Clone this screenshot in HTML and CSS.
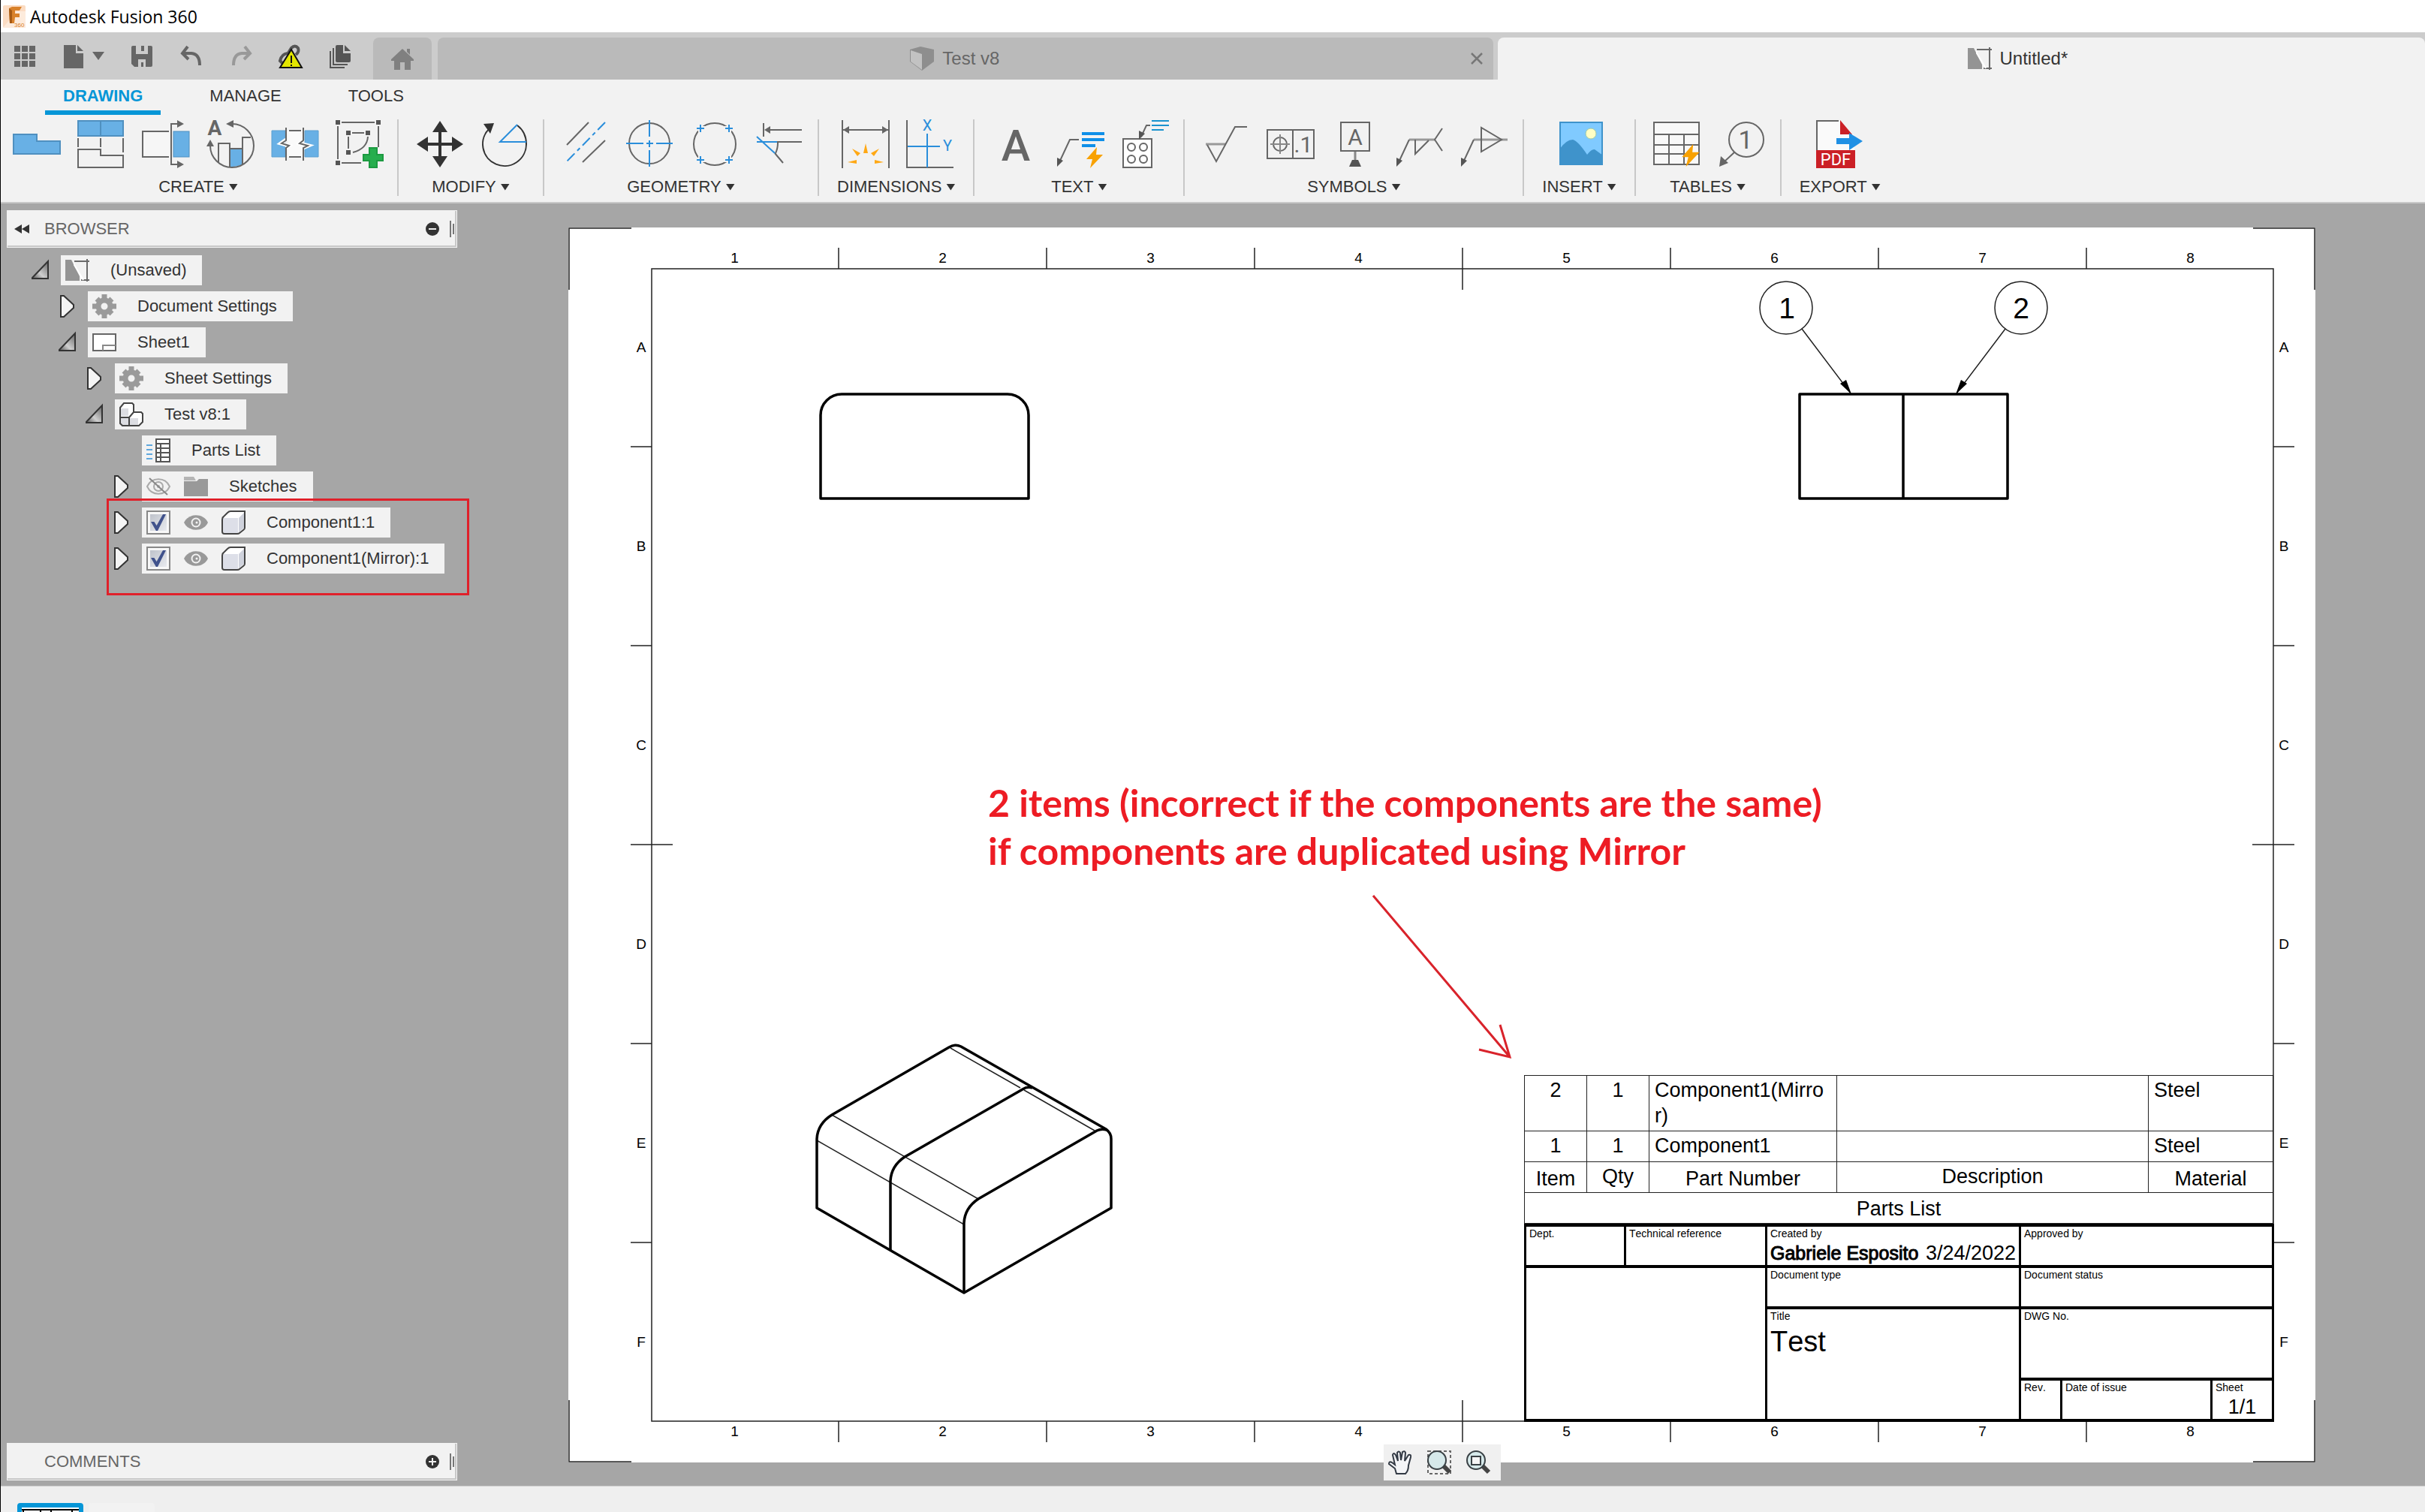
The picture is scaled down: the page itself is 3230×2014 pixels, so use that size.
FILE: index.html
```html
<!DOCTYPE html>
<html lang="en">
<head>
<meta charset="utf-8">
<title>Autodesk Fusion 360</title>
<link rel="stylesheet" href="styles.css">
</head>
<body>
<svg class="defs" aria-hidden="true">
  <symbol id="i-sheetdoc" viewBox="0 0 32 32"><path d="M0 2H8L19 24V30H0Z" fill="#949494"/><path d="M12 4H32M29 1V31M21 29H32" fill="none" stroke="#6a6a6a" stroke-width="2"/><path d="M12 6V9L24 29" fill="none" stroke="#fff" stroke-width="2"/></symbol>
  <symbol id="i-gear" viewBox="0 0 32 32"><path d="M6 6L26 26M26 6L6 26" stroke="#9a9a9a" stroke-width="7"/><path d="M16 0V32M0 16H32" stroke="#9a9a9a" stroke-width="7"/><circle cx="16" cy="16" r="8" fill="#f2f2f2" stroke="#9a9a9a" stroke-width="7"/></symbol>
  <symbol id="i-eye" viewBox="0 0 32 32"><path d="M0 16C6 3 26 3 32 16C26 29 6 29 0 16Z" fill="#999"/><circle cx="16" cy="16" r="6.500" fill="#f2f2f2"/><circle cx="16" cy="16" r="4.500" fill="#999"/><circle cx="17" cy="16" r="1.500" fill="#f2f2f2"/></symbol>
  <symbol id="i-body" viewBox="0 0 32 32"><path d="M1 12Q1 9 3 8L8 3Q10 1 12 1H31V23Q31 25 29 26L24 30Q23 31 21 31H4Q1 31 1 28Z" fill="#fff"/><path d="M2 10H22V30H4L2 28Z" fill="#dddfe8"/><path d="M23 10L30 3V23L23 29Z" fill="#cfd2dc"/><path d="M1 12Q1 9 3 8L8 3Q10 1 12 1H31V23Q31 25 29 26L24 30Q23 31 21 31H4Q1 31 1 28Z" fill="none" stroke="#444" stroke-width="2"/></symbol>
  <symbol id="i-shut" viewBox="-2 0 24 32"><path d="M1 2H5L18 14V18L5 30H1Z" fill="#f4f4f4" stroke="#333" stroke-width="2"/></symbol>
  <linearGradient id="g-open" x1="0" y1="1" x2="1" y2="0"><stop offset="0" stop-color="#555"/><stop offset=".4" stop-color="#d0d0d0"/><stop offset="1" stop-color="#666"/></linearGradient>
  <symbol id="i-open" viewBox="0 0 24 32"><path d="M1 27L22 5V27Z" fill="url(#g-open)"/><path d="M0 27L22 4V27Z" fill="none" stroke="#333" stroke-width="2"/></symbol>
  <symbol id="i-grip" viewBox="0 0 8 24"><path d="M2 1V23M6 5V19" stroke="#777" stroke-width="2"/></symbol>
  <symbol id="i-bolt" viewBox="0 0 22 28"><path d="M14 0L0 16H8L5 28L22 10H13Z" fill="#f8a100"/></symbol>
</svg>

<header class="titlebar">
  <svg class="applogo" viewBox="0 0 30 30"><rect width="30" height="30" rx="2" fill="#fbdcc3"/><path d="M0 30L18 8H30V30Z" fill="#fdebdc"/><path d="M8 4L12 2H25L22 7H16V11H22V16H16L15 24H9Z" fill="#d9822b"/><path d="M8 4L12 7V24H9Z" fill="#a65a14"/><text x="15" y="29" class="logo-num">360</text></svg>
  <h1>Autodesk Fusion 360</h1>
</header>

<nav class="topbar">
  <div class="quick">
    <button aria-label="Data panel"><svg viewBox="0 0 32 32"><path d="M2 2h8v8H2zM12 2h8v8h-8zM22 2h8v8h-8zM2 12h8v8H2zM12 12h8v8h-8zM22 12h8v8h-8zM2 22h8v8H2zM12 22h8v8h-8zM22 22h8v8h-8z" fill="#666"/></svg></button>
    <button class="file" aria-label="File"><svg viewBox="0 0 32 32"><path d="M2 1H18V12H28V32H2Z" fill="#666"/><path d="M20 1L28 9H20Z" fill="#666"/></svg><i class="caret"></i></button>
    <button aria-label="Save"><svg viewBox="0 0 32 32"><path d="M2 4Q2 2 4 2H28Q30 2 30 4V28Q30 30 28 30H6L2 26Z" fill="#666"/><path d="M8 2H24V13H8ZM11 20H21V30H11Z" fill="#ccc"/><path d="M15 2H19V9H15ZM15 24H18V30H15Z" fill="#666"/></svg></button>
    <button aria-label="Undo"><svg viewBox="0 0 32 32"><path d="M11 3L4 12L12 20M5 12H16Q27 13 27 28" fill="none" stroke="#666" stroke-width="4"/></svg></button>
    <button aria-label="Redo"><svg viewBox="0 0 32 32"><path d="M21 3L28 12L20 20M27 12H17Q6 13 6 28" fill="none" stroke="#999" stroke-width="4"/></svg></button>
    <button aria-label="Warnings"><svg viewBox="0 0 32 32"><path d="M12 13L17 5Q22 0 26 5Q28 10 23 14M12 12Q4 13 2 22L6 26" fill="none" stroke="#555" stroke-width="4"/><path d="M17 7L31 31H2Z" fill="#e3e600" stroke="#111" stroke-width="2"/><path d="M17 15V25M17 27V29" stroke="#111" stroke-width="2"/></svg></button>
    <button aria-label="Versions"><svg viewBox="0 0 32 32"><path d="M10 3Q10 1 12 1H20V12H30V22Q30 24 28 24H12Q10 24 10 22ZM22 1L30 9H22Z" fill="#555"/><path d="M7 5V27H26M3 9V31H22" fill="none" stroke="#555" stroke-width="2"/></svg></button>
  </div>
  <button class="tab home" aria-label="Home"><svg viewBox="0 0 32 32"><path d="M16 3L31 17V19H27V31H19V21H13V31H5V19H1V17ZM22 3H26V11L22 7Z" fill="#808080"/></svg></button>
  <div class="tab doc"><svg viewBox="0 0 32 32"><path d="M0 4L14 0L32 4V20L16 32L0 20Z" fill="#8e8e8e"/><path d="M1 5L16 10V31L1 20Z" fill="#c2c2c2"/></svg><span>Test v8</span><button class="close" aria-label="Close tab"><svg viewBox="0 0 16 16"><path d="M1 1L15 15M15 1L1 15" stroke="#777" stroke-width="2.500"/></svg></button></div>
  <div class="tab active"><svg><use href="#i-sheetdoc"/></svg><span>Untitled*</span></div>
</nav>

<section class="ribbon">
  <div class="ribbon-tabs">
    <a href="#drawing" class="on">DRAWING</a><a href="#manage">MANAGE</a><a href="#tools">TOOLS</a>
  </div>
  <div class="groups">
    <div class="group first">
      <div class="icons">
        <button aria-label="Base view"><svg viewBox="0 0 64 64"><path d="M1 19H32V28H63V45H1Z" fill="#68b0e5" stroke="#4f90c0" stroke-width="2"/></svg></button>
        <button aria-label="Projected view"><svg viewBox="0 0 64 64"><path d="M1 1H61V21H1ZM31 1V21" fill="#68b0e5" stroke="#4f90c0" stroke-width="2"/><path d="M1 24V36M31 24V36M61 24V43M1 39H31V47H61V63H1Z" fill="none" stroke="#666" stroke-width="2"/></svg></button>
        <button aria-label="Section view"><svg viewBox="0 0 64 64"><path d="M36 15H1V49H36" fill="#f6f6f6" stroke="#666" stroke-width="2"/><rect x="42" y="15" width="21" height="34" fill="#68b0e5" stroke="#4f90c0" stroke-width="1"/><path d="M48 5H39V59H48" fill="none" stroke="#666" stroke-width="2"/><path d="M47 0L56 5L47 10ZM47 54L56 59L47 64Z" fill="#666"/></svg></button>
        <button aria-label="Detail view"><svg viewBox="0 0 64 64"><path d="M31 38H48V59Q40 63 31 62Z" fill="#68b0e5"/><path d="M16 57V31H31V62M48 59V23H59M31 38H48" fill="none" stroke="#666" stroke-width="2"/><path d="M34 5A29 29 0 1 1 5 34" fill="none" stroke="#666" stroke-width="2"/><path d="M26 5L36 0V10ZM5 26L0 35H10Z" fill="#666"/><text x="11" y="20" class="ic-a sm">A</text></svg></button>
        <button aria-label="Break view"><svg viewBox="0 0 64 64"><path d="M1 14H19V49H1ZM45 14H63V49H45Z" fill="#68b0e5" stroke="#5b9fd0" stroke-width="1"/><path d="M22 14H42V49H22Z" fill="#fafafa"/><path d="M24 14H40M24 49H40" stroke="#666" stroke-width="2"/><path d="M20 26L13 31L24 34L20 37M43 26L38 31L50 34L43 37" fill="none" stroke="#fff" stroke-width="5"/><path d="M20 10V27L14 31L24 34L20 37V54M43 10V27L38 31L49 34L43 37V54" fill="none" stroke="#666" stroke-width="2"/></svg></button>
        <button aria-label="Create sketch"><svg viewBox="0 0 64 64"><path d="M8 3H52M3 8V52M57 8V36M8 57H34M22 17H38M17 22V38" stroke="#666" stroke-width="2"/><path d="M43 22Q42 38 23 43" fill="none" stroke="#666" stroke-width="2"/><path d="M0 0h6v6H0zM54 0h6v6h-6zM0 54h6v6H0zM14 14h6v6h-6zM40 14h6v6h-6zM14 40h6v6h-6z" fill="#555"/><path d="M45 37H55V46H63V54H55V63H45V54H37V46H45Z" fill="#27ae4e" stroke="#1c9a41" stroke-width="2"/></svg></button>
      </div>
      <button class="menu">CREATE<i class="caret"></i></button>
    </div>
    <div class="group">
      <div class="icons">
        <button aria-label="Move"><svg viewBox="0 0 64 64"><path d="M32 1L42 16H34V30H48V22L63 32L48 42V34H34V48H42L32 63L22 48H30V34H16V42L1 32L16 22V30H30V16H22Z" fill="#333"/></svg></button>
        <button aria-label="Rotate"><svg viewBox="0 0 64 64"><path d="M12 11A29 29 0 1 0 61 32" fill="none" stroke="#333" stroke-width="2"/><path d="M49 7Q61 16 61 32" fill="none" stroke="#333" stroke-width="2"/><path d="M4 5L18 4L13 18Z" fill="#333"/><path d="M49 6L26 29H61" fill="none" stroke="#2a8edb" stroke-width="2"/></svg></button>
      </div>
      <button class="menu">MODIFY<i class="caret"></i></button>
    </div>
    <div class="group">
      <div class="icons">
        <button aria-label="Centerline"><svg viewBox="0 0 64 64"><path d="M36 3L7 33M58 27L28 56" stroke="#666" stroke-width="2"/><path d="M58 3L4 58" stroke="#2a8edb" stroke-width="2" stroke-dasharray="14 5 5 5"/></svg></button>
        <button aria-label="Center mark"><svg viewBox="0 0 64 64"><circle cx="31" cy="31" r="27" fill="none" stroke="#666" stroke-width="2"/><path d="M0 31H23M27 31H36M40 31H62M31 0V22M31 27V36M31 40V62" stroke="#2a8edb" stroke-width="2"/></svg></button>
        <button aria-label="Center mark pattern"><svg viewBox="0 0 64 64"><circle cx="32" cy="32" r="28" fill="none" stroke="#666" stroke-width="2"/><path d="M6 11H20M13 4V18M44 11H58M51 4V18M6 53H20M13 46V60M44 53H58M51 46V60" stroke="#f2f2f2" stroke-width="6"/><path d="M8 11H18M13 6V16M46 11H56M51 6V16M8 53H18M13 48V58M46 53H56M51 48V58" stroke="#2a8edb" stroke-width="2"/></svg></button>
        <button aria-label="Edge extension"><svg viewBox="0 0 64 64"><path d="M11 4V22M14 13H62M29 29H62M26 44L37 57M30 30Q30 38 27 44" fill="none" stroke="#666" stroke-width="2"/><path d="M12 13L20 8V18Z" fill="#666"/><path d="M2 29H29M2 22L26 44" stroke="#2a8edb" stroke-width="2"/></svg></button>
      </div>
      <button class="menu">GEOMETRY<i class="caret"></i></button>
    </div>
    <div class="group">
      <div class="icons">
        <button aria-label="Dimension"><svg viewBox="0 0 64 64"><path d="M1 0V64M63 0V64M2 13H62" stroke="#666" stroke-width="2"/><path d="M2 13L10 8V18ZM62 13L54 8V18Z" fill="#666"/><path d="M32 31L35 44H29ZM14 38L25 44L21 48ZM50 38L39 44L43 48ZM8 56L20 53V58ZM56 56L44 53V58Z" fill="#ffa814"/></svg></button>
        <button aria-label="Ordinate dimension"><svg viewBox="0 0 64 64"><path d="M1 0V63H63" fill="none" stroke="#666" stroke-width="2"/><path d="M28 18V63M2 35H45" stroke="#2a8edb" stroke-width="2"/><text x="28" y="14" class="ic-axis">X</text><text x="55" y="41" class="ic-axis">Y</text></svg></button>
      </div>
      <button class="menu">DIMENSIONS<i class="caret"></i></button>
    </div>
    <div class="group">
      <div class="icons">
        <button aria-label="Text"><svg viewBox="0 0 64 64"><text x="32" y="54" class="ic-a">A</text></svg></button>
        <button aria-label="Leader note"><svg viewBox="0 0 64 64"><path d="M4 56L18 26H30" fill="none" stroke="#666" stroke-width="2"/><path d="M1 50L9 54L1 62Z" fill="#555"/><path d="M34 18H64M34 26H64M34 34H52" stroke="#0f8fe8" stroke-width="4"/><use href="#i-bolt" x="40" y="36" width="22" height="28"/></svg></button>
        <button aria-label="Bend note"><svg viewBox="0 0 64 64"><rect x="3" y="25" width="38" height="38" fill="#fff" stroke="#666" stroke-width="2"/><path d="M27 22L34 7H39" fill="none" stroke="#666" stroke-width="2"/><path d="M24 14L32 18L24 26Z" fill="#555"/><g fill="none" stroke="#666" stroke-width="2"><circle cx="14" cy="36" r="5"/><circle cx="30" cy="36" r="5"/><circle cx="14" cy="52" r="5"/><circle cx="30" cy="52" r="5"/></g><path d="M41 1H64M41 7H64M41 13H57" stroke="#1a93cf" stroke-width="2"/></svg></button>
      </div>
      <button class="menu">TEXT<i class="caret"></i></button>
    </div>
    <div class="group">
      <div class="icons">
        <button aria-label="Surface texture"><svg viewBox="0 0 64 64"><path d="M5 32H32" stroke="#999" stroke-width="3"/><path d="M7 33L19 55L44 9H60" fill="none" stroke="#666" stroke-width="2"/></svg></button>
        <button aria-label="Feature control frame"><svg viewBox="0 0 64 64"><path d="M1 13H63V51H1ZM35 13V51" fill="none" stroke="#666" stroke-width="2"/><circle cx="18" cy="32" r="9" fill="none" stroke="#666" stroke-width="2"/><path d="M5 32H31M18 19V45" stroke="#888" stroke-width="2"/><text x="49" y="43" class="ic-txt">.1</text></svg></button>
        <button aria-label="Datum identifier"><svg viewBox="0 0 64 64"><path d="M13 3H51V41H13Z" fill="none" stroke="#666" stroke-width="2"/><text x="32" y="33" class="ic-txt">A</text><path d="M32 42V54" stroke="#888" stroke-width="3"/><path d="M28 53H36L40 62H24Z" fill="#555"/></svg></button>
        <button aria-label="Welding symbol"><svg viewBox="0 0 64 64"><path d="M18 26H52" stroke="#999" stroke-width="3"/><path d="M4 56L18 26M62 11L52 26L62 41M26 26V45L44 27" fill="none" stroke="#666" stroke-width="2"/><path d="M1 50L9 54L1 62Z" fill="#555"/></svg></button>
        <button aria-label="Taper symbol"><svg viewBox="0 0 64 64"><path d="M18 26H63" stroke="#999" stroke-width="3"/><path d="M4 56L18 26M28 10V42L55 26Z" fill="none" stroke="#666" stroke-width="2"/><path d="M1 50L9 54L1 62Z" fill="#555"/></svg></button>
      </div>
      <button class="menu">SYMBOLS<i class="caret"></i></button>
    </div>
    <div class="group">
      <div class="icons">
        <button aria-label="Insert image"><svg viewBox="0 0 64 64"><rect x="4" y="3" width="56" height="56" fill="#80caff" stroke="#3f93cb" stroke-width="2"/><circle cx="45" cy="18" r="7" fill="#ffffc4" stroke="#9fc9a8" stroke-width="1"/><path d="M3 39Q12 26 21 26Q28 28 40 46Q46 38 50 39L61 47V60H3Z" fill="#3f93cb"/></svg></button>
      </div>
      <button class="menu">INSERT<i class="caret"></i></button>
    </div>
    <div class="group">
      <div class="icons">
        <button aria-label="Table"><svg viewBox="0 0 64 64"><path d="M1 3H61V59H1ZM1 19H61M1 33H61M1 45H61M21 19V59M41 19V59" fill="#f8f8f8" stroke="#666" stroke-width="2"/><use href="#i-bolt" x="38" y="32" width="24" height="30"/></svg></button>
        <button aria-label="Balloon"><svg viewBox="0 0 64 64"><circle cx="38" cy="26" r="23" fill="none" stroke="#666" stroke-width="2"/><path d="M22 43L8 56" stroke="#666" stroke-width="2"/><path d="M4 48L14 57L2 62Z" fill="#666"/><text x="37" y="38" class="ic-txt big">1</text></svg></button>
      </div>
      <button class="menu">TABLES<i class="caret"></i></button>
    </div>
    <div class="group last">
      <div class="icons">
        <button aria-label="Export PDF"><svg viewBox="8 0 64 64"><path d="M6 1H37L57 20V42H6Z" fill="#fafafa"/><path d="M7 42V1H36" fill="none" stroke="#666" stroke-width="2"/><path d="M38 0L54 19H38Z" fill="#cb2026"/><path d="M33 24H50V17L68 28L50 40V32H33Z" fill="#2090e4"/><rect x="6" y="40" width="52" height="24" fill="#cb2026"/><text x="32" y="60" class="ic-pdf">PDF</text></svg></button>
      </div>
      <button class="menu">EXPORT<i class="caret"></i></button>
    </div>
  </div>
</section>

<main>
  <aside>
    <div class="panel">
      <svg class="back" viewBox="0 0 20 12"><path d="M10 0V12L0 6ZM20 0V12L10 6Z" fill="#333"/></svg>
      <h2>BROWSER</h2>
      <button aria-label="Collapse"><svg viewBox="0 0 18 18"><circle cx="9" cy="9" r="9" fill="#333"/><path d="M4 9H14" stroke="#eee" stroke-width="2"/></svg></button>
      <svg class="grip"><use href="#i-grip"/></svg>
    </div>
    <ul class="tree">
      <li><svg class="arrow"><use href="#i-open"/></svg><div class="node"><svg><use href="#i-sheetdoc"/></svg><span>(Unsaved)</span></div></li>
      <li class="d1"><svg class="arrow"><use href="#i-shut"/></svg><div class="node"><svg><use href="#i-gear"/></svg><span>Document Settings</span></div></li>
      <li class="d1"><svg class="arrow"><use href="#i-open"/></svg><div class="node"><svg viewBox="0 0 32 32"><path d="M1 5H31V27H1Z" fill="#fff" stroke="#666" stroke-width="2"/><path d="M14 27V20H31" fill="none" stroke="#888" stroke-width="2"/></svg><span>Sheet1</span></div></li>
      <li class="d2"><svg class="arrow"><use href="#i-shut"/></svg><div class="node"><svg><use href="#i-gear"/></svg><span>Sheet Settings</span></div></li>
      <li class="d2"><svg class="arrow"><use href="#i-open"/></svg><div class="node"><svg viewBox="0 0 32 32"><path d="M1 7L6 1H17L19 3V13H29L31 15V26L26 31H4L1 28Z" fill="#fff"/><path d="M2 8H12V18H2ZM2 21H12V30H2ZM14 21H25V30H14Z" fill="#dcdde2"/><path d="M1 7L6 1H17L19 3V13H29L31 15V26L26 31H4L1 28ZM1 20H13V31M13 20L19 13" fill="none" stroke="#444" stroke-width="2"/></svg><span>Test v8:1</span></div></li>
      <li class="d3"><i class="arrow"></i><div class="node"><svg viewBox="0 0 32 32"><path d="M0 9H8M0 15H8M0 21H8M0 27H8" stroke="#5fa8de" stroke-width="2"/><path d="M13 1H31V31H13ZM13 7H31M13 13H31M13 19H31M13 25H31M19 7V31" fill="#fff" stroke="#555" stroke-width="2"/></svg><span>Parts List</span></div></li>
      <li class="d3"><svg class="arrow"><use href="#i-shut"/></svg><div class="node"><svg viewBox="0 0 32 32"><path d="M1 16C7 3 25 3 31 16C25 29 7 29 1 16Z" fill="none" stroke="#aaa" stroke-width="2"/><circle cx="16" cy="16" r="6" fill="none" stroke="#aaa" stroke-width="2"/><circle cx="16" cy="16" r="2" fill="#aaa"/><path d="M4 5L28 27" stroke="#888" stroke-width="2"/></svg><svg viewBox="0 0 32 32"><path d="M0 3H13L16 8H0Z" fill="#b5b5b5"/><path d="M0 9H17L20 6H32V29H0Z" fill="#999"/></svg><span>Sketches</span></div></li>
      <li class="d3"><svg class="arrow"><use href="#i-shut"/></svg><label class="node"><input type="checkbox" checked><svg><use href="#i-eye"/></svg><svg><use href="#i-body"/></svg><span>Component1:1</span></label></li>
      <li class="d3"><svg class="arrow"><use href="#i-shut"/></svg><label class="node"><input type="checkbox" checked><svg><use href="#i-eye"/></svg><svg><use href="#i-body"/></svg><span>Component1(Mirror):1</span></label></li>
    </ul>
    <div class="highlight"></div>
    <div class="panel comments">
      <h2>COMMENTS</h2>
      <button aria-label="Expand"><svg viewBox="0 0 18 18"><circle cx="9" cy="9" r="9" fill="#333"/><path d="M4 9H14M9 4V14" stroke="#eee" stroke-width="2"/></svg></button>
      <svg class="grip"><use href="#i-grip"/></svg>
    </div>
  </aside>

  <div class="workspace">
    <div class="sheet">
      <svg class="linework" viewBox="757 303 2327 1645">
        <g class="thin">
          <path d="M868 358H3028V1893H868Z"/>
          <path d="M758 386V304H841M3001 304H3083V386M3083 1865V1947H3001M841 1947H758V1865"/>
          <path d="M1117 330V358M1394 330V358M1671 330V358M1948 330V386M2225 330V358M2502 330V358M2779 330V358"/>
          <path d="M1117 1893V1921M1394 1893V1921M1671 1893V1921M1948 1865V1921M2225 1893V1921M2502 1893V1921M2779 1893V1921"/>
          <path d="M840 595H868M840 860H868M840 1125H896M840 1390H868M840 1655H868"/>
          <path d="M3028 595H3056M3028 860H3056M3000 1125H3056M3028 1390H3056M3028 1655H3056"/>
          <circle cx="2379" cy="410" r="35"/><circle cx="2692" cy="410" r="35"/>
          <path d="M2400 438L2465 524M2671 438L2606 524"/>
          <path d="M1108 1485L1303 1597M1088 1519L1284 1631M1266 1396L1359 1449M1364 1452L1458 1506"/>
        </g>
        <path d="M2466 525L2451 511L2459 506ZM2605 525L2620 511L2612 506Z"/>
        <g class="thick">
          <path d="M1093 664V553A28 28 0 0 1 1121 525H1342A28 28 0 0 1 1370 553V664Z"/>
          <path d="M2397 525H2674V664H2397ZM2535 525V664"/>
          <path d="M1088 1609V1517Q1089 1497 1108 1485L1264 1395Q1272 1390 1280 1394L1473 1504Q1480 1509 1480 1517V1609L1284 1722Z"/>
          <path d="M1186 1665V1573Q1187 1553 1205 1541L1362 1451Q1368 1447 1375 1449"/>
          <path d="M1284 1722V1629Q1285 1609 1303 1597L1461 1506Q1467 1503 1474 1505"/>
        </g>
        <text x="2380" y="424" class="balloon">1</text><text x="2692" y="424" class="balloon">2</text>
        <path class="callout" d="M1829 1193L2011 1408M1998 1365L2011 1408L1970 1398"/>
        <text class="note"><tspan x="1316" y="1088">2 items (incorrect if the components are the same)</tspan><tspan x="1316" y="1152">if components are duplicated using Mirror</tspan></text>
      </svg>
      <div class="zone cols top"><b>1</b><b>2</b><b>3</b><b>4</b><b>5</b><b>6</b><b>7</b><b>8</b></div>
      <div class="zone rows left"><b>A</b><b>B</b><b>C</b><b>D</b><b>E</b><b>F</b></div>
      <div class="frame">
        <table class="parts">
          <colgroup><col class="c-item"><col class="c-qty"><col class="c-part"><col><col class="c-mat"></colgroup>
          <tbody>
            <tr class="tall"><td>2</td><td>1</td><td class="l">Component1(Mirror)</td><td></td><td class="l">Steel</td></tr>
            <tr><td>1</td><td>1</td><td class="l">Component1</td><td></td><td class="l">Steel</td></tr>
            <tr class="head"><th>Item</th><th class="up">Qty</th><th>Part Number</th><th class="up">Description</th><th>Material</th></tr>
            <tr><td colspan="5" class="caption">Parts List</td></tr>
          </tbody>
        </table>
        <div class="titleblock">
          <div class="a">Dept.</div>
          <div class="b">Technical reference</div>
          <div class="c">Created by<p class="author"><strong>Gabriele Esposito</strong> <span>3/24/2022</span></p></div>
          <div class="d">Approved by</div>
          <div class="e"></div>
          <div class="f">Document type</div>
          <div class="g">Document status</div>
          <div class="h">Title<p class="name">Test</p></div>
          <div class="i">DWG No.</div>
          <div class="j">Rev.</div>
          <div class="k">Date of issue</div>
          <div class="m">Sheet<p class="num">1/1</p></div>
        </div>
      </div>
      <div class="zone rows right"><b>A</b><b>B</b><b>C</b><b>D</b><b>E</b><b>F</b></div>
      <div class="zone cols bottom"><b>1</b><b>2</b><b>3</b><b>4</b><b>5</b><b>6</b><b>7</b><b>8</b></div>
    </div>
    <div class="viewnav">
      <button aria-label="Pan"><svg viewBox="0 0 32 32"><path d="M11 31L9 24L1 18Q1 14 5 16L9 19L6 6Q7 2 10 6L13 14L12 3Q14 0 16 3L17 13L19 2Q22 0 23 3L22 14L27 6Q31 5 30 9L27 20Q27 27 23 31Z" fill="#f4f5f8" stroke="#333a45" stroke-width="2"/></svg></button>
      <button aria-label="Zoom window"><svg viewBox="0 0 32 32"><path d="M1 1H31V31H1Z" fill="none" stroke="#666" stroke-width="2" stroke-dasharray="4 3"/><path d="M22 21L30 29" stroke="#444" stroke-width="6"/><circle cx="13" cy="13" r="12" fill="#d6e9ea" stroke="#3a4145" stroke-width="2"/></svg></button>
      <button aria-label="Fit"><svg viewBox="0 0 32 32"><path d="M22 21L30 29" stroke="#444" stroke-width="6"/><circle cx="13" cy="13" r="12" fill="#d6e9ea" stroke="#3a4145" stroke-width="2"/><path d="M7 8H19V19H7Z" fill="#f6f6f6" stroke="#3a4145" stroke-width="2"/></svg></button>
    </div>
  </div>
</main>

<footer>
  <div class="thumb"><svg viewBox="0 0 76 12"><path d="M0 3H76M2 3V12M25 3V12M39 3V12M67 3V12" stroke="#000" stroke-width="2"/></svg></div>
  <div class="thumb add"></div>
</footer>
</body>
</html>
```
FILE: styles.css
```css
* { box-sizing: border-box; }

body {
  margin: 0;
  min-height: 100vh;
  display: flex;
  flex-direction: column;
  border-left: 1px solid #000;
  background: #a6a6a6;
  color: #333;
  font: 22px/26px "Liberation Sans", Arial, sans-serif;
}

h1, h2, p, ul { margin: 0; padding: 0; font-weight: 400; }
svg { display: block; flex: none; overflow: visible; }
button { margin: 0; padding: 0; border: 0; background: none; font: inherit; color: inherit; }
.defs { position: absolute; width: 0; height: 0; }

/* window title */
.titlebar {
  height: 43px;
  display: flex;
  align-items: center;
  gap: 6px;
  padding-left: 3px;
  background: #fff;
}
.titlebar h1 { font: 23px/30px "Open Sans", sans-serif; color: #000; }
.applogo { width: 30px; height: 30px; }
.logo-num { font: 8px "Liberation Sans", sans-serif; fill: #d9822b; }

/* quick access bar and document tabs */
.topbar {
  height: 63px;
  display: grid;
  grid-template-columns: auto 86px 8fr 7fr;
  align-items: end;
  background: #ccc;
}
.quick {
  display: flex;
  align-self: center;
  gap: 34px;
  padding: 0 28px 0 16px;
}
.quick svg, .tab > svg { width: 32px; height: 32px; }
.file { display: flex; align-items: center; gap: 8px; }
.caret {
  width: 12px;
  height: 9px;
  background: currentColor;
  clip-path: polygon(0 0, 100% 0, 50% 100%);
}
.file .caret { width: 16px; height: 11px; color: #666; }
.tab {
  height: 56px;
  display: flex;
  align-items: center;
  justify-content: center;
  gap: 11px;
  border-radius: 8px 8px 0 0;
  background: #bababa;
  color: #666;
  font-size: 24px;
}
.home { margin-right: 8px; }
.doc { margin-right: 6px; padding-right: 28px; position: relative; }
.active { padding-left: 150px; background: #f2f2f2; color: #333; }
.close { position: absolute; right: 14px; top: 20px; }
.close svg { width: 16px; height: 16px; }

/* ribbon */
.ribbon { background: #f2f2f2; border-bottom: 2px solid #c8c8c8; padding-bottom: 8px; }
.ribbon-tabs { display: flex; padding-left: 59px; gap: 41px; }
.ribbon-tabs a {
  height: 47px;
  padding: 9px 24px 0;
  color: #333;
  text-decoration: none;
}
.ribbon-tabs .on { font-weight: 700; color: #0696d7; border-bottom: 6px solid #0696d7; }
.groups { display: flex; padding-top: 6px; }
.group {
  height: 102px;
  display: flex;
  flex-direction: column;
  align-items: center;
  border-right: 2px solid #c8c8c8;
}
.first { padding-right: 18px; padding-left: 16px; }
.last { border: 0; }
.icons { display: flex; gap: 22px; padding: 1px 19px 0 23px; }
.first .icons { padding: 1px 0 0; }
.icons svg { width: 64px; height: 64px; }
.menu { display: flex; align-items: center; gap: 6px; margin-top: 12px; padding: 0 24px; }
.ic-a { font: 500 58px Roboto, sans-serif; fill: #666; text-anchor: middle; }
.ic-a.sm { font: 700 28px Roboto, sans-serif; }
.ic-axis { font: 20px Roboto, sans-serif; fill: #2a8edb; text-anchor: middle; }
.ic-txt { font: 30px Roboto, sans-serif; fill: #666; text-anchor: middle; }
.ic-txt.big { font-size: 34px; }
.ic-pdf { font: 22px Roboto, sans-serif; fill: #fff; text-anchor: middle; }

/* browser panel */
main { flex: 1; display: flex; }
aside {
  width: 608px;
  flex: none;
  display: flex;
  flex-direction: column;
  position: relative;
  padding: 9px 0 7px 8px;
}
.panel {
  height: 50px;
  display: flex;
  align-items: center;
  gap: 13px;
  padding: 0 2px 0 9px;
  background: #f2f2f2;
  border: 1px solid #f2f2f2;
  box-shadow: inset -2px -2px #c8c8c8;
}
.panel h2 { flex: 1; font-size: 22px; color: #666; }
.panel button svg { width: 18px; height: 18px; }
.back { width: 20px; height: 12px; margin-right: 7px; }
.grip { width: 8px; height: 24px; }
.comments { margin-top: auto; padding-left: 49px; }

.tree { list-style: none; padding: 10px 0 0 33px; display: flex; flex-direction: column; gap: 8px; }
.tree li { display: flex; align-items: center; }
.tree .d1 { padding-left: 36px; }
.tree .d2 { padding-left: 72px; }
.tree .d3 { padding-left: 108px; }
.arrow { width: 24px; height: 32px; margin-right: 15px; }
.node {
  height: 40px;
  display: flex;
  align-items: center;
  gap: 18px;
  padding: 0 21px 0 6px;
  background: #f2f2f2;
}
.node svg { width: 32px; height: 32px; }
.node span { padding-left: 10px; }
.node input {
  appearance: none;
  width: 32px;
  height: 32px;
  margin: 0;
  border: 2px solid #888;
  outline: 3px solid #f8f8f8;
  outline-offset: -5px;
  background: linear-gradient(135deg, #b9bdc6, #eef0f4);
}
.node input:checked::after {
  content: "";
  display: block;
  width: 20px;
  height: 22px;
  margin: 3px 4px;
  background: #40528c;
  clip-path: polygon(0 45%, 22% 45%, 38% 68%, 80% 0, 100% 0, 45% 100%, 34% 100%);
}
.highlight {
  position: absolute;
  left: 141px;
  top: 393px;
  width: 483px;
  height: 129px;
  border: 3px solid #e0202a;
}

/* drawing sheet */
.workspace {
  flex: 1;
  display: flex;
  flex-direction: column;
  align-items: center;
  padding: 32px 146px 7px 148px;
}
.sheet {
  width: 100%;
  aspect-ratio: 2327 / 1645;
  position: relative;
  display: grid;
  grid-template: 28px 1fr 28px / 28px 1fr 28px;
  padding: 27px 28px 27px 83px;
  background: #fff;
  color: #000;
  font-kerning: none;
}
.linework { position: absolute; left: 0; top: 0; width: 100%; height: 100%; }
.thin { fill: none; stroke: #222; stroke-width: 1.500; }
.thick { fill: none; stroke: #000; stroke-width: 3.500; stroke-linejoin: round; }
.balloon { font-size: 39px; text-anchor: middle; }
.callout { fill: none; stroke: #d9232b; stroke-width: 3; }
.note { font: 700 50px Lato, sans-serif; fill: #ed1c24; font-kerning: normal; }

.zone { display: grid; font-size: 19px; line-height: 28px; text-align: center; }
.zone b { font-weight: 400; }
.cols { grid-column: 1 / -1; grid-template-columns: repeat(8, 1fr); }
.rows { grid-row: 1 / -1; grid-template-rows: repeat(6, 1fr); align-items: center; }
.top { grid-row: 1; }
.bottom { grid-row: 3; }
.left { grid-column: 1; }
.right { grid-column: 3; }
.frame {
  grid-area: 2 / 2;
  display: flex;
  flex-direction: column;
  align-items: flex-end;
  justify-content: flex-end;
  position: relative;
}

.parts {
  width: 998px;
  table-layout: fixed;
  border-collapse: collapse;
  font-size: 27px;
  line-height: 34px;
  text-align: center;
}
.c-item, .c-qty { width: 83px; }
.c-part { width: 250px; }
.c-mat { width: 166px; }
.parts tr { height: 41px; }
.parts .tall { height: 74px; }
.parts td, .parts th { border: 1px solid #222; padding: 2px 7px; font-weight: 400; vertical-align: top; overflow-wrap: anywhere; }
.parts .l { text-align: left; padding-right: 11px; }
.parts th { padding: 5px 0 1px; }
.parts .up { padding-top: 2px; padding-bottom: 4px; }
.parts .caption { padding-top: 4px; padding-bottom: 2px; }

.titleblock {
  display: grid;
  grid-template-columns: 130px 185px 335px 52px 197px 79px;
  grid-template-rows: 51px 51px 91px 51px;
  grid-template-areas: "a b c d d d" "e e f g g g" "e e h i i i" "e e h j k m";
  gap: 4px 3px;
  padding: 4px 3px;
  margin: 0 -1px -1px 0;
  background: #000;
  font-size: 14px;
  line-height: 16px;
}
.titleblock div { background: #fff; padding: 1px 4px; }
.a { grid-area: a; } .b { grid-area: b; } .c { grid-area: c; } .d { grid-area: d; }
.e { grid-area: e; } .f { grid-area: f; } .g { grid-area: g; } .h { grid-area: h; }
.i { grid-area: i; } .j { grid-area: j; } .k { grid-area: k; } .m { grid-area: m; }
.author { display: flex; justify-content: space-between; line-height: 36px; font-size: 27px; }
.author strong { font-size: 25px; font-weight: 400; -webkit-text-stroke: 1px #000; }
.name { font-size: 38px; line-height: 52px; }
.num { font-size: 27px; line-height: 36px; text-align: center; }

.viewnav {
  display: flex;
  gap: 20px;
  margin-top: -24px;
  padding: 8px 14px 8px 6px;
  background: #f0f0f0;
  position: relative;
}
.viewnav svg { width: 32px; height: 32px; }

/* sheet strip */
footer {
  height: 35px;
  display: flex;
  gap: 7px;
  padding: 22px 0 0 22px;
  overflow: hidden;
  background: #efefef;
  border-top: 1px solid #ccc;
}
.thumb { width: 88px; height: 64px; border: 6px solid #0696d7; border-radius: 4px; background: #fff; }
.thumb svg { width: 76px; height: 12px; }
.thumb.add { border: 0; background: #f2f2f2; }
```
